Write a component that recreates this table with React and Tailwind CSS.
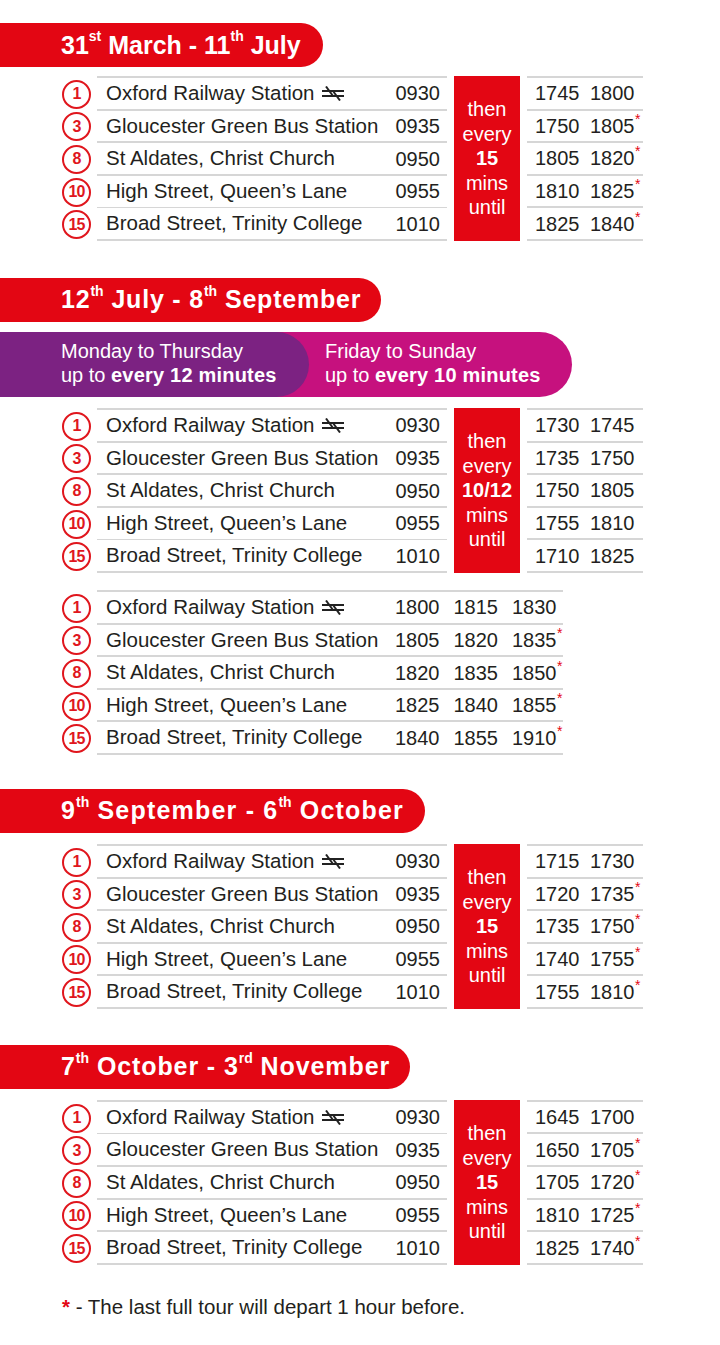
import React from "react";

const FONT = { fontFamily: '"Liberation Sans", Arial, Helvetica, sans-serif' };

const stops = [
  { n: "1", name: "Oxford Railway Station", rail: true },
  { n: "3", name: "Gloucester Green Bus Station" },
  { n: "8", name: "St Aldates, Christ Church" },
  { n: "10", name: "High Street, Queen\u2019s Lane" },
  { n: "15", name: "Broad Street, Trinity College" },
];

const firstTimes = ["0930", "0935", "0950", "0955", "1010"];

function Rail() {
  return (
    <svg width="24" height="15" viewBox="0 0 24 15" className="ml-[6px] inline-block" aria-hidden="true">
      <g stroke="#222" strokeWidth="2" fill="none" strokeLinecap="butt">
        <line x1="1" y1="5" x2="23" y2="5" />
        <line x1="1" y1="10" x2="23" y2="10" />
        <line x1="5" y1="0.5" x2="12" y2="10" />
        <line x1="12" y1="5" x2="19" y2="14.5" />
      </g>
    </svg>
  );
}

function Circle({ n }) {
  return (
    <div className="w-[29px] h-[29px] shrink-0 rounded-full border-2 border-[#e0161d] flex items-center justify-center text-[#e0161d] text-[16px] font-bold leading-none tracking-[-0.8px]">
      {n}
    </div>
  );
}

function Time({ t }) {
  const star = t.endsWith("*");
  const v = star ? t.slice(0, -1) : t;
  return (
    <span className="relative inline-block w-[45px]">
      {v}
      {star && (
        <span className="absolute left-[45px] top-[1px] text-[#e30613] text-[14px] leading-none">*</span>
      )}
    </span>
  );
}

function StopCol({ extra }) {
  return (
    <div className="flex flex-col">
      <div className="ml-[97px] h-[2px] bg-[#d6d6d6]" />
      {stops.map((s, i) => (
        <div key={s.n} className="flex items-center h-[32.6px]">
          <div className="w-[62px]" />
          <Circle n={s.n} />
          <div className="ml-[6px] flex-1 h-full flex flex-col">
            <div className="flex-1 flex items-center pl-[9px]">
              <span className="flex-1 flex items-center text-[20.5px]">
                {s.name}
                {s.rail && <Rail />}
              </span>
              {extra(i)}
            </div>
            <div className="h-[2px] bg-[#d6d6d6]" />
          </div>
        </div>
      ))}
    </div>
  );
}

function Box({ every }) {
  return (
    <div className="w-[66px] ml-[7px] bg-[#e30613] text-white flex flex-col items-center justify-center text-[20px] leading-[24.5px]">
      <span>then</span>
      <span>every</span>
      <span className="font-bold">{every}</span>
      <span>mins</span>
      <span>until</span>
    </div>
  );
}

function RightCol({ rows }) {
  return (
    <div className="ml-[7px] w-[116px] flex flex-col">
      <div className="h-[2px] bg-[#d6d6d6]" />
      {rows.map((r, i) => (
        <div key={i} className="h-[32.6px] flex flex-col">
          <div className="flex-1 flex items-center pl-[8px] gap-[10px]">
            {r.map((t, j) => (
              <Time key={j} t={t} />
            ))}
          </div>
          <div className="h-[2px] bg-[#d6d6d6]" />
        </div>
      ))}
    </div>
  );
}

function BoxTable({ every, rows }) {
  return (
    <div className="flex">
      <div className="w-[447px]">
        <StopCol
          extra={(i) => (
            <span className="w-[45px] mr-[7px] text-right">{firstTimes[i]}</span>
          )}
        />
      </div>
      <Box every={every} />
      <RightCol rows={rows} />
    </div>
  );
}

function WideTable({ rows }) {
  return (
    <div className="w-[563px]">
      <StopCol
        extra={(i) => (
          <span className="flex gap-[13.5px] pr-[6px]">
            {rows[i].map((t, j) => (
              <Time key={j} t={t} />
            ))}
          </span>
        )}
      />
    </div>
  );
}

function Header({ children, className = "", barClass = "" }) {
  return (
    <div className={"flex " + className}>
      <div
        className={
          "h-[44px] bg-[#e30613] rounded-r-full flex items-center pl-[61px] text-white font-bold text-[25px] leading-none " +
          barClass
        }
      >
        {children}
      </div>
    </div>
  );
}

function Sup({ children }) {
  return <span className="text-[14px] relative top-[-9px] tracking-[0px]">{children}</span>;
}

export default function App() {
  return (
    <div style={FONT} className="w-[720px] min-h-[1345px] bg-white text-[#231f20] text-[20px] pt-[23px]">
      <Header barClass="pr-[22px] tracking-[0px]">
        31<Sup>st</Sup>&nbsp;March - 11<Sup>th</Sup>&nbsp;July
      </Header>
      <div className="mt-[9px]">
        <BoxTable
          every="15"
          rows={[
            ["1745", "1800"],
            ["1750", "1805*"],
            ["1805", "1820*"],
            ["1810", "1825*"],
            ["1825", "1840*"],
          ]}
        />
      </div>

      <Header className="mt-[37px]" barClass="pr-[20px] tracking-[0.8px]">
        12<Sup>th</Sup>&nbsp;July - 8<Sup>th</Sup>&nbsp;September
      </Header>

      <div className="mt-[10px] flex">
        <div className="w-[572px] h-[65px] bg-[#c6117e] rounded-r-full flex text-white text-[20px] leading-[24px]">
          <div className="w-[309px] h-full bg-[#7c2282] rounded-r-full flex flex-col justify-center pl-[61px] pb-[2px]">
            <span>Monday to Thursday</span>
            <span>
              up to <b className="tracking-[0.2px]">every 12 minutes</b>
            </span>
          </div>
          <div className="flex flex-col justify-center pl-[16px] pb-[2px]">
            <span>Friday to Sunday</span>
            <span>
              up to <b className="tracking-[0.2px]">every 10 minutes</b>
            </span>
          </div>
        </div>
      </div>

      <div className="mt-[11px]">
        <BoxTable
          every="10/12"
          rows={[
            ["1730", "1745"],
            ["1735", "1750"],
            ["1750", "1805"],
            ["1755", "1810"],
            ["1710", "1825"],
          ]}
        />
      </div>

      <div className="mt-[17px]">
        <WideTable
          rows={[
            ["1800", "1815", "1830"],
            ["1805", "1820", "1835*"],
            ["1820", "1835", "1850*"],
            ["1825", "1840", "1855*"],
            ["1840", "1855", "1910*"],
          ]}
        />
      </div>

      <Header className="mt-[34px]" barClass="pr-[21px] tracking-[1.2px]">
        9<Sup>th</Sup>&nbsp;September - 6<Sup>th</Sup>&nbsp;October
      </Header>
      <div className="mt-[11px]">
        <BoxTable
          every="15"
          rows={[
            ["1715", "1730"],
            ["1720", "1735*"],
            ["1735", "1750*"],
            ["1740", "1755*"],
            ["1755", "1810*"],
          ]}
        />
      </div>

      <Header className="mt-[36px]" barClass="pr-[20px] tracking-[0.9px]">
        7<Sup>th</Sup>&nbsp;October - 3<Sup>rd</Sup>&nbsp;November
      </Header>
      <div className="mt-[11px]">
        <BoxTable
          every="15"
          rows={[
            ["1645", "1700"],
            ["1650", "1705*"],
            ["1705", "1720*"],
            ["1810", "1725*"],
            ["1825", "1740*"],
          ]}
        />
      </div>

      <div className="mt-[27px] pl-[62px] text-[20.5px]">
        <span className="text-[#e30613] font-bold">*</span> - The last full tour will depart 1 hour before.
      </div>
    </div>
  );
}
